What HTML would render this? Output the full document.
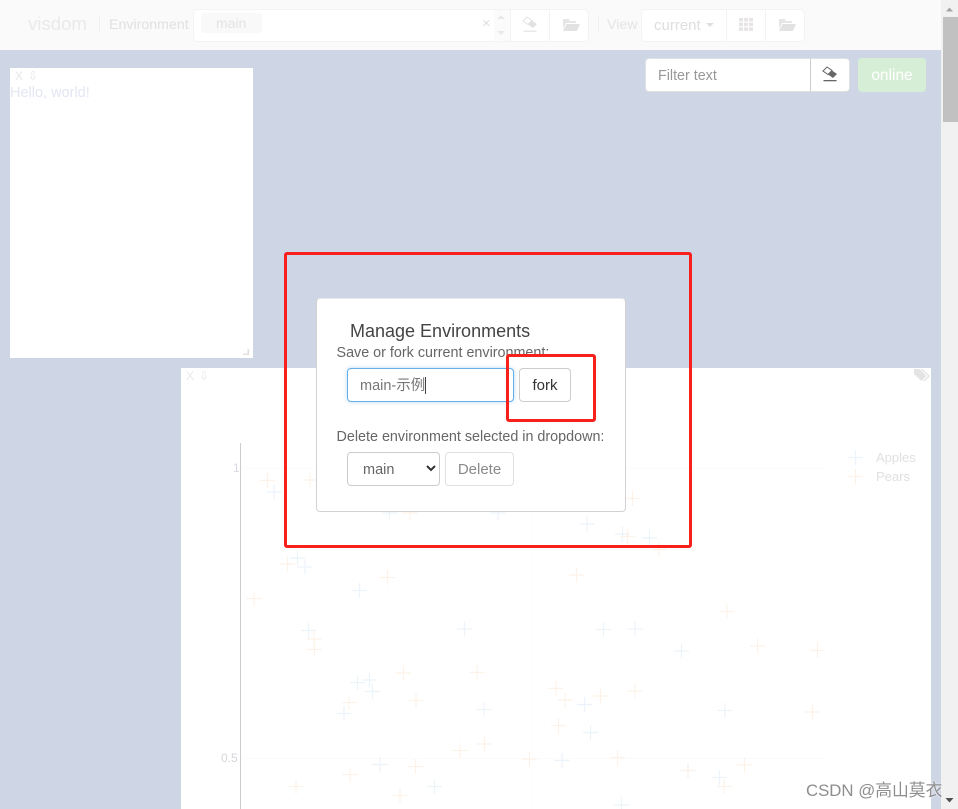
<!DOCTYPE html>
<html lang="en">
<head>
<meta charset="utf-8">
<title>visdom</title>
<style>
html,body{margin:0;padding:0;width:958px;height:809px;overflow:hidden;background:#ced5e5;}
body{position:relative;font-family:"Liberation Sans","Noto Sans CJK SC",sans-serif;}
.a{position:absolute;box-sizing:border-box;white-space:nowrap;}
.btn{position:absolute;box-sizing:border-box;background:#fff;border:1px solid #f3f3f3;}
.red{position:absolute;box-sizing:border-box;border:3px solid #f7201a;border-radius:3px;}
svg{position:absolute;overflow:visible;}
</style>
</head>
<body>

<!-- navbar -->
<div class="a" style="left:0;top:0;width:941px;height:50px;background:#fafafa;"></div>
<div class="a" style="left:28px;top:12px;font-size:18.600px;line-height:24px;color:#ebe9e9;">visdom</div>
<div class="a" style="left:99px;top:15px;width:1px;height:18px;background:#f0f0f0;"></div>
<div class="a" style="left:109px;top:16px;font-size:14.200px;line-height:18px;color:#e2e0e0;">Environment</div>

<div class="btn" style="left:193px;top:9px;width:318px;height:33px;border-radius:5px 0 0 5px;"></div>
<div class="a" style="left:201px;top:13px;width:61px;height:20px;background:#f9f9f9;border-radius:3px;"></div>
<div class="a" style="left:216px;top:14px;font-size:14px;line-height:18px;color:#e4e3e3;">main</div>
<div class="a" style="left:482px;top:15px;font-size:15px;line-height:18px;color:#e0e0e0;">×</div>
<div class="a" style="left:494px;top:10px;width:16px;height:31px;background:#fbfbfb;"></div>
<svg style="left:0;top:0" width="958" height="50"><path d="M497 19l4-4 4 4zM497 31l4 4 4-4z" fill="#e9e9e9"/></svg>

<div class="btn" style="left:510px;top:9px;width:40px;height:33px;"></div>
<div class="btn" style="left:549px;top:9px;width:40px;height:33px;border-radius:0 5px 5px 0;"></div>
<svg style="left:522px;top:16px" width="16" height="17" viewBox="0 0 16 17"><path d="M1 5L5 1 10 4.500 6 8.500z" fill="#fff" stroke="#e4e4e4" stroke-width="1"/><path d="M6 8.500L10 4.500 15 8 11 12z" fill="#e2e2e2"/><rect x="1.500" y="14.500" width="13" height="1.300" fill="#e4e4e4"/></svg>
<svg style="left:562px;top:17px" width="18" height="15" viewBox="0 0 18 15"><path d="M1 12V2h6l1 2h6v2H4z" fill="#e6e6e6"/><path d="M4.500 7H18l-3 7H1z" fill="#e2e2e2"/></svg>

<div class="a" style="left:598px;top:15px;width:1px;height:18px;background:#f0f0f0;"></div>
<div class="a" style="left:607px;top:16px;font-size:14.200px;line-height:18px;color:#e4e4e4;">View</div>

<div class="btn" style="left:641px;top:9px;width:86px;height:33px;border-radius:5px 0 0 5px;"></div>
<div class="a" style="left:654px;top:17px;font-size:15px;line-height:18px;color:#dedede;">current</div>
<svg style="left:706px;top:23px" width="8" height="4"><path d="M0 0h8l-4 4z" fill="#dfdfdf"/></svg>
<div class="btn" style="left:726px;top:9px;width:40px;height:33px;"></div>
<div class="btn" style="left:765px;top:9px;width:40px;height:33px;border-radius:0 5px 5px 0;"></div>
<svg style="left:739px;top:18px" width="14" height="13" viewBox="0 0 14 13" fill="#e6e4e4"><rect x="0" y="0" width="4" height="3.500"/><rect x="5" y="0" width="4" height="3.500"/><rect x="10" y="0" width="4" height="3.500"/><rect x="0" y="4.700" width="4" height="3.500"/><rect x="5" y="4.700" width="4" height="3.500"/><rect x="10" y="4.700" width="4" height="3.500"/><rect x="0" y="9.400" width="4" height="3.500"/><rect x="5" y="9.400" width="4" height="3.500"/><rect x="10" y="9.400" width="4" height="3.500"/></svg>
<svg style="left:778px;top:17px" width="18" height="15" viewBox="0 0 18 15"><path d="M1 12V2h6l1 2h6v2H4z" fill="#e6e6e6"/><path d="M4.500 7H18l-3 7H1z" fill="#e2e2e2"/></svg>

<!-- scrollbar -->
<div class="a" style="left:941px;top:0;width:17px;height:809px;background:#f1f1f1;"></div>
<div class="a" style="left:943px;top:17px;width:15px;height:105px;background:#c1c1c1;"></div>
<svg style="left:0;top:0" width="958" height="809"><path d="M946 11.500l3.500-4 3.500 4z" fill="#a3a3a3"/><path d="M945.500 798h8l-4 4.500z" fill="#505050"/></svg>

<!-- filter -->
<div class="a" style="left:645px;top:58px;width:166px;height:34px;background:#fff;border:1px solid #dfe0e2;border-right:1px solid #ccc;border-radius:4px 0 0 4px;"></div>
<div class="a" style="left:658px;top:67px;font-size:14.300px;line-height:18px;color:#989898;">Filter text</div>
<div class="a" style="left:811px;top:58px;width:39px;height:34px;background:#fff;border:1px solid #dfe0e2;border-left:0;border-radius:0 4px 4px 0;"></div>
<svg style="left:822px;top:66px" width="16" height="17" viewBox="0 0 16 17"><path d="M1 5L5 1 10 4.500 6 8.500z" fill="#fff" stroke="#666" stroke-width="1"/><path d="M6 8.500L10 4.500 15 8 11 12z" fill="#666"/><rect x="1.500" y="14" width="13" height="1.300" fill="#666"/></svg>
<div class="a" style="left:858px;top:58px;width:68px;height:34px;background:#d6eed6;border-radius:4px;color:#fff;font-size:15.500px;line-height:35px;text-align:center;">online</div>

<!-- text pane -->
<div class="a" style="left:10px;top:68px;width:243px;height:290px;background:#fff;"></div>
<div class="a" style="left:15px;top:70px;font-size:12px;line-height:13px;color:#e6e6e6;">X</div>
<div class="a" style="left:28px;top:69px;font-size:12px;line-height:14px;color:#e6e6e6;font-family:'DejaVu Sans',sans-serif;">⇩</div>
<div class="a" style="left:10px;top:84px;font-size:14.500px;line-height:18px;color:#e3e6f3;">Hello, world!</div>
<svg style="left:243px;top:348px" width="8" height="8"><path d="M6 1v6H0v-1.500h4.500V1z" fill="#e0e0e0"/></svg>

<!-- plot pane -->
<div class="a" style="left:181px;top:368px;width:750px;height:441px;background:#fff;"></div>
<div class="a" style="left:186px;top:370px;font-size:12px;line-height:13px;color:#e8e8e8;">X</div>
<div class="a" style="left:199px;top:369px;font-size:12px;line-height:14px;color:#e8e8e8;font-family:'DejaVu Sans',sans-serif;">⇩</div>
<svg style="left:913px;top:368px" width="17" height="14" viewBox="0 0 17 14"><path d="M1 1h5.500l7 7-5 5-7.500-7z" fill="#e4e4e4"/><path d="M8.500 1l7.500 7-5 5" fill="none" stroke="#e4e4e4" stroke-width="1.300"/></svg>

<svg style="left:0;top:0" width="958" height="809">
<defs>
<g id="c"><path d="M-7.500 0h15M0-7.500v15" fill="none" stroke-width="1.200"/></g>
</defs>
<path d="M241 468.500H824M241 758.500H824" stroke="#fbfbfb" stroke-width="1"/>
<path d="M532.500 443V809" stroke="#fdfdfd" stroke-width="1"/>
<path d="M240.500 443V809" stroke="#cccccc" stroke-width="1"/>
<g stroke="#ecf3fa">
<use href="#c" x="274" y="492"/><use href="#c" x="297.500" y="558"/><use href="#c" x="305" y="567"/><use href="#c" x="389.500" y="513"/><use href="#c" x="498" y="513"/><use href="#c" x="587" y="524"/><use href="#c" x="622.500" y="534"/><use href="#c" x="649.500" y="538"/>
<use href="#c" x="359.500" y="590.500"/><use href="#c" x="308.500" y="630.500"/><use href="#c" x="357.500" y="682.500"/><use href="#c" x="369.500" y="680"/><use href="#c" x="372.500" y="691.500"/><use href="#c" x="344" y="713.500"/><use href="#c" x="380" y="764.500"/><use href="#c" x="434.500" y="786.500"/><use href="#c" x="464.500" y="629"/><use href="#c" x="484" y="709.500"/><use href="#c" x="562" y="760.500"/>
<use href="#c" x="603.500" y="629.500"/><use href="#c" x="635" y="629"/><use href="#c" x="681.500" y="651"/><use href="#c" x="584.500" y="704.500"/><use href="#c" x="590.500" y="732.500"/><use href="#c" x="725" y="710.500"/><use href="#c" x="688" y="770.500"/><use href="#c" x="719.500" y="777.500"/><use href="#c" x="621.500" y="805"/>
<use href="#c" x="855.500" y="457.500"/>
</g>
<g stroke="#fdf2e8">
<use href="#c" x="267.500" y="480.500"/><use href="#c" x="310" y="480"/><use href="#c" x="410" y="513"/><use href="#c" x="287.500" y="564"/><use href="#c" x="387.500" y="577.500"/><use href="#c" x="576.500" y="575"/><use href="#c" x="632.500" y="498.500"/><use href="#c" x="627.500" y="536.500"/><use href="#c" x="659" y="549.500"/>
<use href="#c" x="254" y="598.500"/><use href="#c" x="314" y="639"/><use href="#c" x="314.500" y="649.500"/><use href="#c" x="349" y="702.500"/><use href="#c" x="403.500" y="673"/><use href="#c" x="416" y="700.500"/><use href="#c" x="477" y="672.500"/><use href="#c" x="460" y="750.500"/><use href="#c" x="484.500" y="744"/><use href="#c" x="350" y="774.500"/><use href="#c" x="296" y="786.500"/><use href="#c" x="415.500" y="766.500"/><use href="#c" x="400" y="795.500"/><use href="#c" x="529.500" y="759"/><use href="#c" x="556" y="688.500"/><use href="#c" x="565" y="700"/><use href="#c" x="558.500" y="725.500"/>
<use href="#c" x="727" y="611.500"/><use href="#c" x="757.500" y="646"/><use href="#c" x="817.500" y="650.500"/><use href="#c" x="600.500" y="696"/><use href="#c" x="635" y="691"/><use href="#c" x="812.500" y="712"/><use href="#c" x="617.500" y="757.500"/><use href="#c" x="744.500" y="765"/><use href="#c" x="688" y="770.500"/><use href="#c" x="724" y="786.500"/>
<use href="#c" x="855.500" y="476.500"/>
</g>
</svg>
<div class="a" style="left:233px;top:461px;font-size:12px;line-height:14px;color:#dadae0;">1</div>
<div class="a" style="left:221px;top:751px;font-size:12px;line-height:14px;color:#d5d5dc;">0.5</div>
<div class="a" style="left:876px;top:451px;font-size:13px;line-height:14px;color:#e0e0e0;">Apples</div>
<div class="a" style="left:876px;top:470px;font-size:13px;line-height:14px;color:#e0e0e0;">Pears</div>

<!-- dialog -->
<div class="a" style="left:316px;top:298px;width:310px;height:214px;background:#fff;border:1px solid #d2d2d2;border-top-color:#e8e8e8;border-radius:4px;"></div>
<div class="a" style="left:350px;top:320px;font-size:18px;line-height:22px;color:#444;">Manage Environments</div>
<div class="a" style="left:336.500px;top:345px;font-size:14.350px;line-height:17px;color:#666;">Save or fork current environment:</div>
<div class="a" style="left:347px;top:368px;width:167px;height:34px;background:#fff;border:1px solid #66afe9;border-radius:4px;box-shadow:0 0 4px rgba(102,175,233,.45);"></div>
<div class="a" style="left:360px;top:377px;font-size:14.500px;line-height:18px;color:#777;">main-示例</div>
<div class="a" style="left:425px;top:377px;width:1px;height:17px;background:#444;"></div>
<div class="a" style="left:519px;top:368px;width:52px;height:34px;background:#fff;border:1px solid #ccc;border-radius:4px;font-size:15px;line-height:33px;text-align:center;color:#333;">fork</div>
<div class="a" style="left:336.500px;top:429px;font-size:14.350px;line-height:17px;color:#666;">Delete environment selected in dropdown:</div>
<div class="a" style="left:347px;top:452px;width:93px;height:34px;background:#fff;border:1px solid #ccc;border-radius:4px;"></div>
<div class="a" style="left:363px;top:461px;font-size:14.500px;line-height:18px;color:#666;">main</div>
<svg style="left:426px;top:465px" width="10" height="7"><path d="M1 1l4 4 4-4" fill="none" stroke="#333" stroke-width="2"/></svg>
<div class="a" style="left:445px;top:452px;width:69px;height:34px;background:#fff;border:1px solid #e0e0e0;border-radius:4px;font-size:15px;line-height:33px;text-align:center;color:#8a8a8a;">Delete</div>

<!-- annotations -->
<div class="red" style="left:283.500px;top:251.500px;width:408.500px;height:296.500px;"></div>
<div class="red" style="left:505.500px;top:353.500px;width:90px;height:68.500px;"></div>

<!-- watermark -->
<div class="a" style="left:806px;top:780px;font-size:16.800px;line-height:22px;color:#8e8e8e;text-shadow:0 0 2px #fff;">CSDN @高山莫衣</div>

</body>
</html>
